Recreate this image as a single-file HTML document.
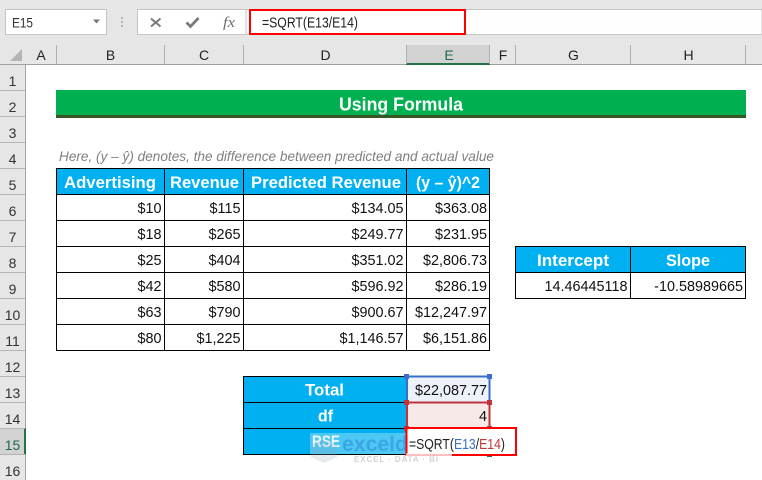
<!DOCTYPE html>
<html><head><meta charset="utf-8"><style>
html,body{margin:0;padding:0;background:#fff;width:762px;height:480px;overflow:hidden}
svg{display:block}
text{font-family:"Liberation Sans",sans-serif}
.c{font-size:14.400px;fill:#111;text-anchor:end}
.h{font-size:17px;font-weight:bold;fill:#fff}
.ch{font-size:14px;fill:#222;text-anchor:middle}
.rh{font-size:14px;fill:#333;text-anchor:middle}
</style></head><body>
<svg width="762" height="480" viewBox="0 0 762 480" xmlns="http://www.w3.org/2000/svg">
<rect width="762" height="480" fill="#fff"/>
<!-- top bar -->
<rect width="762" height="64" fill="#E6E6E6"/>
<rect x="5.500" y="9.500" width="101" height="25" fill="#fff" stroke="#c6c6c6"/>
<text x="12" y="27.500" font-size="14" fill="#333" textLength="21" lengthAdjust="spacingAndGlyphs">E15</text>
<path d="M93 19.500h7l-3.500 4z" fill="#777"/>
<g fill="#b5b5b5"><rect x="121" y="17" width="2" height="2"/><rect x="121" y="21" width="2" height="2"/><rect x="121" y="25" width="2" height="2"/></g>
<rect x="137.500" y="9.500" width="109" height="25" fill="#fff" stroke="#c6c6c6"/>
<path d="M151 18.500l9.500 8M160.500 18.500l-9.500 8" stroke="#7a7a7a" stroke-width="2" fill="none"/>
<path d="M186.500 22.500l4 4 8-8.500" stroke="#7a7a7a" stroke-width="2.800" fill="none"/>
<text x="223" y="27" style="font-family:'Liberation Serif',serif" font-style="italic" font-size="15" fill="#6f6f6f" textLength="12" lengthAdjust="spacingAndGlyphs">fx</text>
<rect x="246" y="9.500" width="516" height="25" fill="#fefefe" stroke="#c6c6c6"/>
<rect x="250" y="10" width="215" height="24" fill="#fff" stroke="#f00" stroke-width="2"/>
<text x="262" y="27.500" font-size="14.500" fill="#222" textLength="96" lengthAdjust="spacingAndGlyphs">=SQRT(E13/E14)</text>
<!-- corner -->
<path d="M10 61L22 49V61z" fill="#b4b4b4"/>
<!-- column headers -->
<rect x="406" y="45" width="84" height="19" fill="#D2D2D2"/>
<rect x="0" y="64" width="762" height="1" fill="#9f9f9f"/>
<rect x="406" y="63" width="84" height="2" fill="#217346"/>
<g fill="#b0b0b0">
<rect x="56" y="45" width="1" height="19"/><rect x="164" y="45" width="1" height="19"/><rect x="243" y="45" width="1" height="19"/><rect x="406" y="45" width="1" height="19"/><rect x="489" y="45" width="1" height="19"/><rect x="515" y="45" width="1" height="19"/><rect x="630" y="45" width="1" height="19"/><rect x="745" y="45" width="1" height="19"/>
</g>
<text class="ch" x="41" y="60">A</text><text class="ch" x="110.500" y="60">B</text><text class="ch" x="204" y="60">C</text><text class="ch" x="325.500" y="60">D</text><text class="ch" x="449" y="60" style="fill:#1f6b4a">E</text><text class="ch" x="503" y="60">F</text><text class="ch" x="573.500" y="60">G</text><text class="ch" x="688.500" y="60">H</text>
<!-- row headers -->
<rect x="0" y="65" width="26" height="415" fill="#E6E6E6"/>
<rect x="0" y="428" width="26" height="26" fill="#D2D2D2"/>
<rect x="25" y="65" width="1" height="415" fill="#a6a6a6"/>
<rect x="24" y="428" width="2" height="26" fill="#217346"/>
<g fill="#b5b5b5">
<rect x="0" y="90" width="25" height="1"/><rect x="0" y="116" width="25" height="1"/><rect x="0" y="142" width="25" height="1"/><rect x="0" y="168" width="25" height="1"/><rect x="0" y="194" width="25" height="1"/><rect x="0" y="220" width="25" height="1"/><rect x="0" y="246" width="25" height="1"/><rect x="0" y="272" width="25" height="1"/><rect x="0" y="298" width="25" height="1"/><rect x="0" y="324" width="25" height="1"/><rect x="0" y="350" width="25" height="1"/><rect x="0" y="376" width="25" height="1"/><rect x="0" y="402" width="25" height="1"/><rect x="0" y="428" width="25" height="1"/><rect x="0" y="454" width="25" height="1"/>
</g>
<text class="rh" x="12.500" y="86">1</text><text class="rh" x="12.500" y="112">2</text><text class="rh" x="12.500" y="138">3</text><text class="rh" x="12.500" y="164">4</text><text class="rh" x="12.500" y="190">5</text><text class="rh" x="12.500" y="216">6</text><text class="rh" x="12.500" y="242">7</text><text class="rh" x="12.500" y="268">8</text><text class="rh" x="12.500" y="294">9</text><text class="rh" x="12.500" y="320">10</text><text class="rh" x="12.500" y="346">11</text><text class="rh" x="12.500" y="372">12</text><text class="rh" x="12.500" y="398">13</text><text class="rh" x="12.500" y="424">14</text><text class="rh" x="12.500" y="450" style="fill:#1f6b4a">15</text><text class="rh" x="12.500" y="476">16</text>
<!-- title -->
<rect x="56" y="90" width="690" height="25" fill="#00B050"/>
<rect x="56" y="115" width="690" height="3" fill="#375623"/>
<text x="339" y="110.500" font-size="18.500" font-weight="bold" fill="#fff" textLength="124" lengthAdjust="spacingAndGlyphs">Using Formula</text>
<!-- note -->
<text x="59" y="161" font-size="14" font-style="italic" fill="#7f7f7f" textLength="435" lengthAdjust="spacingAndGlyphs">Here, (y – ŷ) denotes, the difference between predicted and actual value</text>
<!-- main table -->
<rect x="56" y="168" width="434" height="26" fill="#00B0F0"/>
<g stroke="#000" stroke-width="1" fill="none">
<path d="M56.500 168.500H489.500M56.500 194.500H489.500M56.500 220.500H489.500M56.500 246.500H489.500M56.500 272.500H489.500M56.500 298.500H489.500M56.500 324.500H489.500M56.500 350.500H489.500"/>
<path d="M56.500 168V351M164.500 168V351M243.500 168V351M406.500 168V351M489.500 168V351"/>
</g>
<text class="h" x="64" y="188" textLength="92" lengthAdjust="spacingAndGlyphs">Advertising</text>
<text class="h" x="170" y="188" textLength="69" lengthAdjust="spacingAndGlyphs">Revenue</text>
<text class="h" x="251" y="188" textLength="150" lengthAdjust="spacingAndGlyphs">Predicted Revenue</text>
<text class="h" x="416" y="188" textLength="64" lengthAdjust="spacingAndGlyphs">(y – ŷ)^2</text>
<text class="c" x="161.500" y="213">$10</text><text class="c" x="240.500" y="213">$115</text><text class="c" x="403.500" y="213">$134.05</text><text class="c" x="487" y="213">$363.08</text>
<text class="c" x="161.500" y="239">$18</text><text class="c" x="240.500" y="239">$265</text><text class="c" x="403.500" y="239">$249.77</text><text class="c" x="487" y="239">$231.95</text>
<text class="c" x="161.500" y="265">$25</text><text class="c" x="240.500" y="265">$404</text><text class="c" x="403.500" y="265">$351.02</text><text class="c" x="487" y="265">$2,806.73</text>
<text class="c" x="161.500" y="291">$42</text><text class="c" x="240.500" y="291">$580</text><text class="c" x="403.500" y="291">$596.92</text><text class="c" x="487" y="291">$286.19</text>
<text class="c" x="161.500" y="317">$63</text><text class="c" x="240.500" y="317">$790</text><text class="c" x="403.500" y="317">$900.67</text><text class="c" x="487" y="317">$12,247.97</text>
<text class="c" x="161.500" y="343">$80</text><text class="c" x="240.500" y="343">$1,225</text><text class="c" x="403.500" y="343">$1,146.57</text><text class="c" x="487" y="343">$6,151.86</text>
<!-- intercept table -->
<rect x="515" y="246" width="231" height="26" fill="#00B0F0"/>
<g stroke="#000" stroke-width="1" fill="none">
<path d="M515.500 246.500H745.500M515.500 272.500H745.500M515.500 298.500H745.500M515.500 246V299M630.500 246V299M745.500 246V299"/>
</g>
<text class="h" x="537" y="266" textLength="72" lengthAdjust="spacingAndGlyphs">Intercept</text>
<text class="h" x="666" y="266" textLength="44" lengthAdjust="spacingAndGlyphs">Slope</text>
<text class="c" x="627.500" y="291">14.46445118</text>
<text class="c" x="743" y="291">-10.58989665</text>
<!-- total table -->
<rect x="243" y="376" width="164" height="78" fill="#00B0F0"/>
<path d="M243.500 376.500H407M243.500 402.500H407M243.500 428.500H407M243.500 454.500H407M243.500 376V455" stroke="#000" fill="none"/>
<text class="h" x="305" y="395.500" textLength="39" lengthAdjust="spacingAndGlyphs">Total</text>
<text class="h" x="318" y="421.500" textLength="15" lengthAdjust="spacingAndGlyphs">df</text>
<text class="h" x="312" y="447" textLength="28" lengthAdjust="spacingAndGlyphs" style="fill:#e8f4fb">RSE</text>
<!-- E13/E14 -->
<rect x="407" y="376" width="83" height="26" fill="#EDF1FA"/>
<rect x="407" y="402" width="83" height="26" fill="#F8E9E9"/>
<text class="c" x="487" y="395">$22,087.77</text>
<text class="c" x="487" y="421">4</text>
<!-- watermark -->
<rect x="310" y="433" width="96" height="21" fill="#fff" fill-opacity=".3"/>
<path d="M311 445l13-5 13 5v12l-13 6-13-6z" fill="#8fa6b8" fill-opacity=".22"/>
<text x="342" y="451" font-size="21" font-weight="bold" fill="#2f8fd8" fill-opacity=".6" textLength="66" lengthAdjust="spacingAndGlyphs">exceld</text>
<text x="354" y="462" font-size="8" font-weight="bold" fill="#d0d3d6" textLength="84">EXCEL · DATA · BI</text>
<path d="M407 402.500V376.500H489.500V402.500" fill="none" stroke="#3A6FC9" stroke-width="2"/>
<path d="M407 402.500H489.500M407 402V428M489.500 402V428" fill="none" stroke="#C2343C" stroke-width="2"/>
<g fill="#3A6FC9"><rect x="404" y="374" width="5" height="5"/><rect x="487" y="374" width="5" height="5"/></g>
<g fill="#C2343C"><rect x="404" y="400" width="5" height="5"/><rect x="487" y="400" width="5" height="5"/><rect x="404" y="426" width="5" height="5"/><rect x="487" y="426" width="5" height="5"/></g>
<rect x="487" y="452" width="5" height="5" fill="#217346"/>
<!-- formula box -->
<rect x="406.500" y="428" width="109.500" height="27" fill="#fff" stroke="#f00" stroke-width="2"/>
<text x="409" y="449" font-size="14.500" fill="#222" textLength="96" lengthAdjust="spacingAndGlyphs">=SQRT(<tspan fill="#3A6FC9">E13</tspan>/<tspan fill="#C2343C">E14</tspan>)</text>
<rect x="406" y="453.500" width="46" height="3" fill="#fff" fill-opacity=".75"/>
</svg>
</body></html>
